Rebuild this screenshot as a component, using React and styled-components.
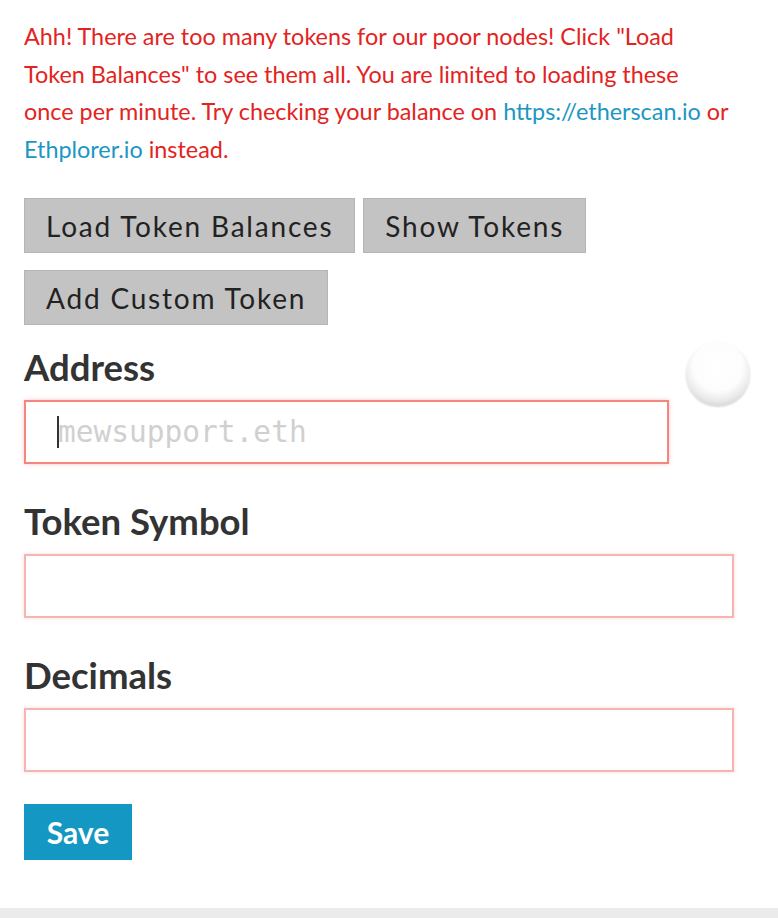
import styled, { createGlobalStyle } from 'styled-components'

const GlobalStyle = createGlobalStyle`
  html, body {
    margin: 0;
    padding: 0;
    background: #fff;
    font-family: Lato, "Open Sans", sans-serif;
  }
`

const Page = styled.div`
  min-height: 918px;
  display: flex;
  flex-direction: column;
`

const Content = styled.div`
  flex: 1;
  padding: 18px 44px 48px 24px;
`

const Warning = styled.p`
  margin: 0 -30px 30px 0;
  font-size: 23.4px;
  line-height: 37.5px;
  color: #e3231d;
  font-weight: 400;

  a {
    color: #1b97c4;
    text-decoration: none;
  }
`

const ButtonRow = styled.div`
  display: flex;
  flex-wrap: wrap;
  gap: 17px 8px;
  max-width: 600px;
  margin-bottom: 22px;
`

const GrayButton = styled.button`
  height: 55px;
  padding: 0 21px;
  background: #c3c3c3;
  border: 1px solid #b5b5b5;
  border-radius: 0;
  font-family: Lato, sans-serif;
  font-size: 28px;
  letter-spacing: 1.8px;
  color: #222;
  cursor: pointer;
`

const Field = styled.div`
  margin-bottom: ${p => p.$gap || 37}px;
`

const AddressRow = styled.div`
  display: flex;
  align-items: flex-start;
  gap: 17px;
  margin: 0 -16px 37px 0;
`

const Grow = styled.div`
  flex: 1;
`

const Label = styled.label`
  display: block;
  font-size: 36.5px;
  line-height: 40px;
  font-weight: 700;
  color: #333;
  margin-bottom: 13px;
`

const Input = styled.input`
  display: block;
  width: 100%;
  box-sizing: border-box;
  height: 64px;
  padding: 0 32px;
  border: 2px solid ${p => (p.$strong ? '#f3867f' : '#f7b5b1')};
  box-shadow: 0 0 4px ${p => (p.$strong ? 'rgba(243,134,127,0.45)' : 'rgba(247,181,177,0.45)')};
  outline: none;
  font-family: "DejaVu Sans Mono", "Liberation Mono", monospace;
  font-size: 29.5px;
  color: #333;

  &::placeholder {
    color: #d0d0d0;
  }
`

const Caret = styled.span`
  position: absolute;
  left: 33px;
  top: 16px;
  width: 2px;
  height: 32px;
  background: #333;
`

const InputWrap = styled.div`
  position: relative;
`

const Identicon = styled.div`
  flex: none;
  width: 64px;
  height: 64px;
  margin-top: -5px;
  border-radius: 50%;
  background: radial-gradient(circle at 50% 38%, #fff 0%, #fdfdfd 48%, #e9e9e9 68%, #c9c9c9 86%, #9f9f9f 100%);
  box-shadow: 0 1px 2px rgba(0, 0, 0, 0.18);
`

const SaveButton = styled.button`
  height: 56px;
  width: 108px;
  background: #1497c2;
  border: none;
  border-radius: 0;
  color: #fff;
  font-family: Lato, sans-serif;
  font-weight: 700;
  font-size: 30px;
  cursor: pointer;
`

const Footer = styled.div`
  height: 10px;
  background: #ebebeb;
`

export default function App() {
  return (
    <>
      <GlobalStyle />
      <Page>
        <Content>
          <Warning>
            Ahh! There are too many tokens for our poor nodes! Click "Load
            <br />
            Token Balances" to see them all. You are limited to loading these
            <br />
            once per minute. Try checking your balance on <a href="#">https://etherscan.io</a> or
            <br />
            <a href="#">Ethplorer.io</a> instead.
          </Warning>

          <ButtonRow>
            <GrayButton>Load Token Balances</GrayButton>
            <GrayButton>Show Tokens</GrayButton>
            <GrayButton>Add Custom Token</GrayButton>
          </ButtonRow>

          <AddressRow>
            <Grow>
              <Label>Address</Label>
              <InputWrap>
                <Input $strong placeholder="mewsupport.eth" />
                <Caret />
              </InputWrap>
            </Grow>
            <Identicon />
          </AddressRow>

          <Field>
            <Label>Token Symbol</Label>
            <Input />
          </Field>

          <Field $gap={32}>
            <Label>Decimals</Label>
            <Input />
          </Field>

          <SaveButton>Save</SaveButton>
        </Content>
        <Footer />
      </Page>
    </>
  )
}
